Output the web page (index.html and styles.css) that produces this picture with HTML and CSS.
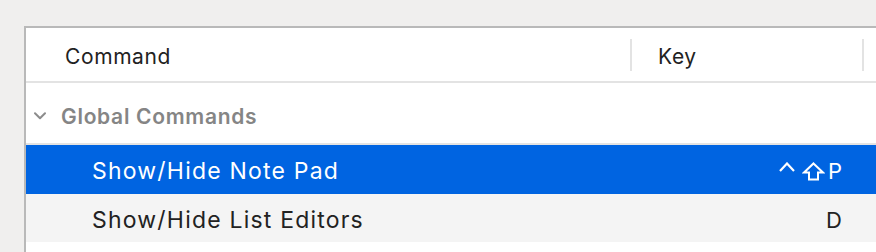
FILE: index.html
```html
<!DOCTYPE html>
<html>
<head>
<meta charset="utf-8">
<link rel="stylesheet" href="styles.css">
</head>
<body>
<div class="table">
  <div class="header">
    <div class="col-cmd">Command</div>
    <div class="col-key">Key</div>
    <div class="col-rest"></div>
  </div>
  <div class="group">
    <svg class="chev" width="12" height="8" viewBox="0 0 12 8"><path d="M1 1.2 L6 6.2 L11 1.2" fill="none" stroke="#8c8c8c" stroke-width="2" stroke-linecap="round" stroke-linejoin="round"/></svg>
    <span class="group-title">Global Commands</span>
  </div>
  <div class="row selected">
    <span class="name">Show/Hide Note Pad</span>
    <span class="key"><svg class="ctrl" width="16" height="10" viewBox="0 0 16 10"><path d="M1 9 L8 1.5 L15 9" fill="none" stroke="#fff" stroke-width="2.2" stroke-linejoin="miter"/></svg><svg class="shift" width="23" height="19" viewBox="0 0 23 19"><path d="M11.5 1.5 L21 10.5 L16 10.5 L16 17.5 L7 17.5 L7 10.5 L2 10.5 Z" fill="none" stroke="#fff" stroke-width="2" stroke-linejoin="miter"/></svg><span class="kletter">P</span></span>
  </div>
  <div class="row alt">
    <span class="name">Show/Hide List Editors</span>
    <span class="key"><span class="kletter">D</span></span>
  </div>
</div>
</body>
</html>
```
FILE: styles.css
```css
html, body {
  margin: 0;
  padding: 0;
}
body {
  background: #f0efee;
  font-family: "Inter", "Noto Sans", sans-serif;
  width: 876px;
  height: 252px;
  overflow: hidden;
  padding: 26px 0 0 24px;
  box-sizing: border-box;
}
.table {
  background: #fff;
  border-top: 2px solid #b9b9b9;
  border-left: 2px solid #b9b9b9;
  height: 226px;
  box-sizing: border-box;
}
.header {
  display: flex;
  height: 53px;
  align-items: center;
  border-bottom: 2px solid #e3e3e3;
  font-size: 21px;
  letter-spacing: 0.6px;
  color: #222;
}
.col-cmd {
  width: 606px;
  padding-left: 39px;
  padding-top: 4px;
  box-sizing: border-box;
  height: 32px;
  display: flex;
  align-items: center;
  border-right: 2px solid #e3e3e3;
}
.col-key {
  width: 232px;
  padding-left: 26px;
  padding-top: 4px;
  box-sizing: border-box;
  height: 32px;
  display: flex;
  align-items: center;
  border-right: 2px solid #e3e3e3;
}
.group {
  display: flex;
  align-items: center;
  height: 62px;
  border-bottom: 2px solid #e3e3e3;
  padding-left: 8px;
  padding-top: 6px;
  box-sizing: border-box;
}
.chev {
  display: block;
  margin-right: 15px;
  margin-top: -1px;
}
.group-title {
  font-size: 21px;
  font-weight: 600;
  letter-spacing: 0.7px;
  color: #858585;
}
.row {
  display: flex;
  align-items: center;
  justify-content: space-between;
  box-sizing: border-box;
  padding-left: 66px;
  padding-right: 34px;
  padding-top: 3px;
  font-size: 23px;
  letter-spacing: 1.2px;
}
.row .key {
  display: flex;
  align-items: center;
}
.kletter {
  letter-spacing: 0;
  font-size: 22px;
}
.selected {
  background: #0064e1;
  color: #fff;
  height: 49px;
}
.alt {
  background: #f4f4f4;
  color: #222;
  height: 48px;
}
.ctrl {
  display: block;
  margin-right: 7px;
  margin-top: -8px;
}
.shift {
  display: block;
  margin-right: 3px;
}
```
